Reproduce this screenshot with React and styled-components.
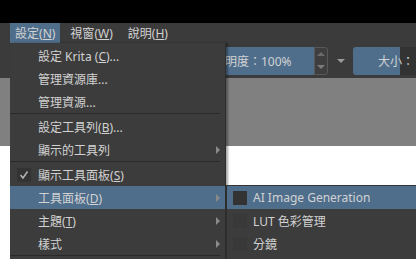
import React from 'react';
import styled, { createGlobalStyle } from 'styled-components';

const Colors = {
  Black: '#000000',
  Bar: '#3b3b3b',
  Menu: '#3c3c3c',
  Blue: '#4f6e8c',
  Text: '#d2d2d2',
  Dim: '#8a8a8a',
  Line: '#2a2a2a',
  Canvas: '#808080',
  Paper: '#ffffff',
};

const GlobalStyle = createGlobalStyle`
  body {
    margin: 0;
    background: ${Colors.Canvas};
    font-family: "Noto Sans", "Noto Sans CJK TC", sans-serif;
    overflow: hidden;
  }
`;

const Screen = styled.div`
  position: relative;
  width: 416px;
  height: 259px;
  overflow: hidden;
  display: flex;
  flex-direction: column;
  font-size: 12px;
  color: ${Colors.Text};
`;

const TitleStrip = styled.div`
  height: 23px;
  background: ${Colors.Black};
`;

const MenuBar = styled.div`
  height: 20px;
  background: ${Colors.Bar};
  display: flex;
  align-items: stretch;
  gap: 5px;
  padding-left: 10px;
`;

const MenuTitle = styled.div`
  display: flex;
  align-items: center;
  padding: 0 5px;
  background: ${p => (p.active ? Colors.Blue : 'transparent')};
  white-space: nowrap;
`;

const ToolBar = styled.div`
  height: 35px;
  background: ${Colors.Bar};
  display: flex;
  align-items: center;
  padding-left: 190px;
`;

// slider: blue part is the value, the rest stays dark
const SliderField = styled.div`
  height: 28px;
  width: ${p => (p.width ? `${p.width}px` : 'auto')};
  flex: ${p => (p.width ? 'none' : 1)};
  margin-left: ${p => p.gap || 0}px;
  border-radius: 3px 0 0 3px;
  background: linear-gradient(
    to right,
    ${Colors.Blue} 0,
    ${Colors.Blue} ${p => p.fill}px,
    #333333 ${p => p.fill}px
  );
  display: flex;
  align-items: center;
  padding-left: ${p => p.pad}px;
  box-sizing: border-box;
  white-space: nowrap;
  overflow: hidden;
`;

const Spinner = styled.div`
  width: 14px;
  height: 28px;
  box-sizing: border-box;
  border: 1px solid #585858;
  border-radius: 0 3px 3px 0;
  background: #3e3e3e;
  display: flex;
  flex-direction: column;
  align-items: center;
  justify-content: space-around;
`;

const Tri = styled.span`
  width: 0;
  height: 0;
  border-left: ${p => p.w}px solid transparent;
  border-right: ${p => p.w}px solid transparent;
  ${p => (p.up ? 'border-bottom' : 'border-top')}: ${p => p.h}px solid ${p => p.color || Colors.Dim};
`;

const DropButton = styled.div`
  width: 25px;
  height: 28px;
  display: flex;
  align-items: center;
  justify-content: center;
`;

const CanvasGray = styled.div`
  height: 68px;
  background: ${Colors.Canvas};
`;

const CanvasPaper = styled.div`
  flex: 1;
  background: ${Colors.Paper};
`;

const DropMenu = styled.div`
  position: absolute;
  left: 10px;
  top: 43px;
  width: 216px;
  height: 230px;
  box-sizing: border-box;
  background: ${Colors.Menu};
  border-right: 1px solid #2e2e2e;
  padding-top: 1px;
  box-shadow: 2px 0 2px rgba(0, 0, 0, 0.35);
`;

const SubMenu = styled.div`
  position: absolute;
  left: 226px;
  top: 185px;
  width: 200px;
  height: 90px;
  background: ${Colors.Menu};
  border-left: 1px solid #2e2e2e;
  border-top: 1px solid #353535;
`;

const Row = styled.div`
  height: 23px;
  display: flex;
  align-items: center;
  background: ${p => (p.active ? Colors.Blue : 'transparent')};
  position: relative;
  white-space: nowrap;
`;

const IconSlot = styled.div`
  width: 28px;
  display: flex;
  justify-content: center;
`;

const CheckBox = styled.div`
  width: 14px;
  height: 14px;
  background: ${p => p.bg};
  display: flex;
  align-items: center;
  justify-content: center;
`;

const Label = styled.span`
  flex: 1;
`;

const Arrow = styled.span`
  width: 0;
  height: 0;
  margin-right: 5px;
  border-top: 4px solid transparent;
  border-bottom: 4px solid transparent;
  border-left: 4px solid ${Colors.Dim};
`;

const Separator = styled.div`
  height: 1px;
  margin: 0 5px 1px 0;
  background: ${Colors.Line};
`;

const SubRow = styled(Row)`
  padding-left: 6px;
  gap: 6px;
`;

const Key = ({ k }) => (
  <>
    (<u>{k}</u>)
  </>
);

const Check = () => (
  <svg width="10" height="10" viewBox="0 0 10 10">
    <polyline points="1.5,5 4,8 8.5,1.5" fill="none" stroke="#b8b8b8" strokeWidth="1.4" />
  </svg>
);

const MenuItem = ({ children, active, arrow, checked }) => (
  <Row active={active}>
    <IconSlot>
      {checked && (
        <CheckBox bg="#333333">
          <Check />
        </CheckBox>
      )}
    </IconSlot>
    <Label>{children}</Label>
    {arrow && <Arrow />}
  </Row>
);

const SubItem = ({ children, active }) => (
  <SubRow active={active}>
    <CheckBox bg={active ? '#333333' : '#393939'} />
    <span>{children}</span>
  </SubRow>
);

const App = () => {
  return (
    <Screen>
      <GlobalStyle />
      <TitleStrip />
      <MenuBar>
        <MenuTitle active>設定<Key k="N" /></MenuTitle>
        <MenuTitle>視窗<Key k="W" /></MenuTitle>
        <MenuTitle>說明<Key k="H" /></MenuTitle>
      </MenuBar>
      <ToolBar>
        <SliderField width={124} pad={11} fill={124}>不透明度：100%</SliderField>
        <Spinner>
          <Tri up w={4} h={4} color="#6a6a6a" />
          <Tri w={4} h={4} color="#7a7a7a" />
        </Spinner>
        <DropButton>
          <Tri w={4} h={4} color="#9a9a9a" />
        </DropButton>
        <SliderField gap={0} pad={25} fill={47}>大小：</SliderField>
      </ToolBar>
      <CanvasGray />
      <CanvasPaper />

      <DropMenu>
        <MenuItem>設定 Krita <Key k="C" />...</MenuItem>
        <MenuItem>管理資源庫...</MenuItem>
        <MenuItem>管理資源...</MenuItem>
        <Separator />
        <MenuItem>設定工具列<Key k="B" />...</MenuItem>
        <MenuItem arrow>顯示的工具列</MenuItem>
        <Separator />
        <MenuItem checked>顯示工具面板<Key k="S" /></MenuItem>
        <MenuItem active arrow>工具面板<Key k="D" /></MenuItem>
        <MenuItem arrow>主題<Key k="T" /></MenuItem>
        <MenuItem arrow>樣式</MenuItem>
        <Separator />
      </DropMenu>

      <SubMenu>
        <SubItem active>AI Image Generation</SubItem>
        <SubItem>LUT 色彩管理</SubItem>
        <SubItem>分鏡</SubItem>
      </SubMenu>
    </Screen>
  );
};

export default App;
